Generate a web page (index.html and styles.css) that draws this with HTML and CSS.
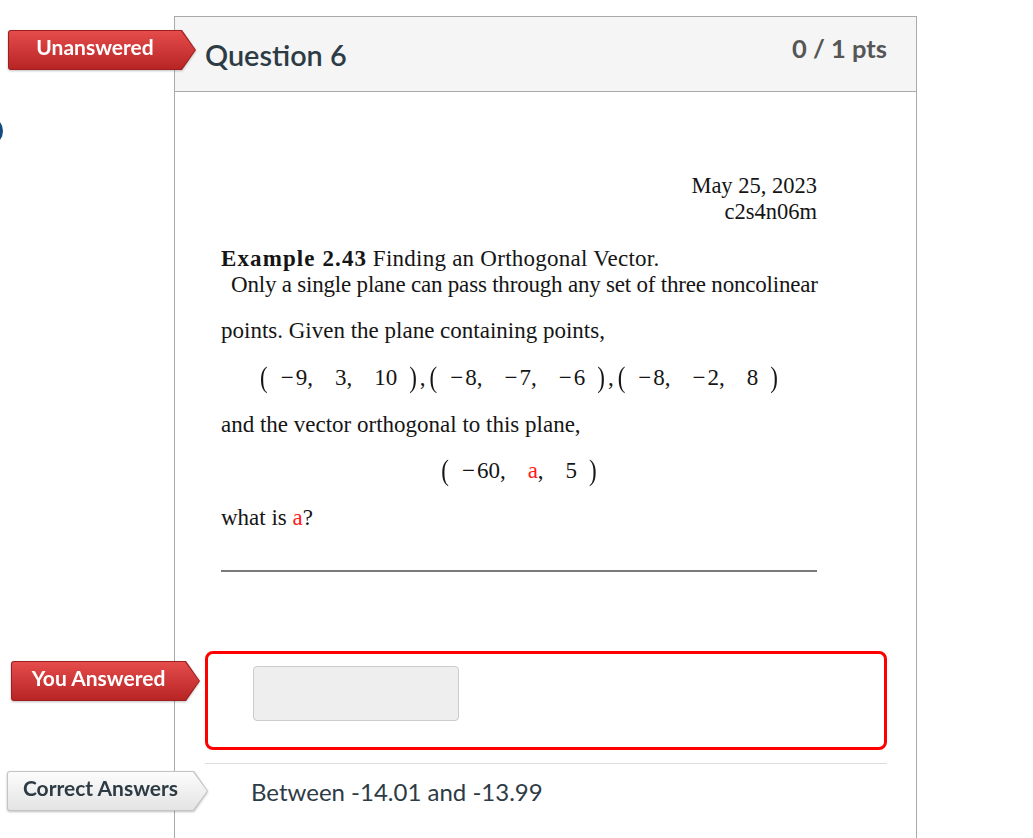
FILE: index.html
```html
<!DOCTYPE html>
<html>
<head>
<meta charset="utf-8">
<link rel="stylesheet" href="styles.css">
</head>
<body>
<div class="blob"></div>
<div class="question">
  <div class="header">
    <div class="tag tag-red tag-unanswered"><div class="tag-bg"></div><span class="tag-label">Unanswered</span></div>
    <h2 class="qname">Question 6</h2>
    <div class="pts">0 / 1 pts</div>
  </div>
  <div class="qbody">
    <div class="tex">
      <div class="meta">May 25, 2023<br>c2s4n06m</div>
      <div class="line gap"><b class="bf">Example 2.43</b> <span class="wide">Finding an Orthogonal Vector.</span></div>
      <div class="line indent">Only a single plane can pass through any set of three noncolinear</div>
      <div class="line gap2">points. Given the plane containing points,</div>
      <div class="math gap">
        <span class="lp">(</span><span class="num"><span class="mi">−</span>9,</span><span class="num">3,</span><span class="num">10</span><span class="rp">)</span><span class="cm">,</span>
        <span class="lp">(</span><span class="num"><span class="mi">−</span>8,</span><span class="num"><span class="mi">−</span>7,</span><span class="num"><span class="mi">−</span>6</span><span class="rp">)</span><span class="cm">,</span>
        <span class="lp">(</span><span class="num"><span class="mi">−</span>8,</span><span class="num"><span class="mi">−</span>2,</span><span class="num">8</span><span class="rp">)</span>
      </div>
      <div class="line gap">and the vector orthogonal to this plane,</div>
      <div class="math gap2">
        <span class="lp">(</span><span class="num"><span class="mi">−</span>60,</span><span class="num"><span class="red">a</span>,</span><span class="num">5</span><span class="rp">)</span>
      </div>
      <div class="line gap">what is <span class="red">a</span>?</div>
      <div class="rule"></div>
    </div>
    <div class="answer-row you">
      <div class="tag tag-red tag-you"><div class="tag-bg"></div><span class="tag-label">You Answered</span></div>
      <div class="answer-box"><div class="input"></div></div>
    </div>
    <div class="answer-row correct">
      <div class="tag tag-gray tag-correct"><div class="tag-bg"></div><span class="tag-label">Correct Answers</span></div>
      <div class="correct-text">Between -14.01 and -13.99</div>
    </div>
  </div>
</div>
</body>
</html>
```
FILE: styles.css
```css
html, body {
  margin: 0;
  padding: 0;
  background: #fff;
  overflow: hidden;
}
body {
  position: relative;
  width: 1033px;
  height: 838px;
  font-family: Lato, "Liberation Sans", sans-serif;
}
.blob {
  position: absolute;
  left: -27px;
  top: 116px;
  width: 30px;
  height: 30px;
  border-radius: 50%;
  background: #124b80;
}
.question {
  margin: 16px 0 0 174px;
  width: 743px;
  box-sizing: border-box;
  border: 1px solid #aaaaaa;
  border-bottom: none;
  height: 900px;
}
.header {
  position: relative;
  height: 74px;
  background: #f5f5f5;
  border-bottom: 1px solid #aaaaaa;
  display: flex;
  justify-content: space-between;
  align-items: flex-start;
  padding: 0 29px 0 30px;
}
.qname {
  margin: 0;
  padding-top: 21px;
  font-size: 28.8px;
  line-height: 34px;
  font-weight: 600;
  color: #2d3b45;
}
.pts {
  padding-top: 16px;
  font-size: 25.5px;
  line-height: 30px;
  font-weight: bold;
  color: #565656;
}
/* tags */
.tag {
  position: absolute;
  height: 40px;
  filter: drop-shadow(0 1px 1px rgba(0,0,0,0.25));
}
.tag-bg {
  position: absolute;
  inset: 0;
  border-radius: 3px 0 0 3px;
  clip-path: polygon(0 0, calc(100% - 14px) 0, 100% 50%, calc(100% - 14px) 100%, 0 100%);
}
.tag-bg::before {
  content: "";
  position: absolute;
  inset: 1px;
  border-radius: 2px 0 0 2px;
  clip-path: polygon(0 0, calc(100% - 14px) 0, 100% 50%, calc(100% - 14px) 100%, 0 100%);
}
.tag-red .tag-bg { background: #9e1f1f; }
.tag-red .tag-bg::before { background: linear-gradient(#e54c4c, #b82424); }
.tag-gray .tag-bg { background: #c4c4c4; }
.tag-gray .tag-bg::before { background: linear-gradient(#fcfcfc, #e4e4e4); }
.tag-label {
  position: relative;
  display: block;
  width: calc(100% - 14px);
  text-align: center;
  line-height: 34px;
  font-size: 21px;
  font-weight: bold;
  color: #fff;
  white-space: nowrap;
}
.tag-gray .tag-label { color: #2d3b45; }
.tag-unanswered { left: -167px; top: 13px; width: 188px; }
.tag-you { left: -194px; top: 10px; width: 189px; }
.tag-correct { left: -198px; top: 7px; width: 201px; }

/* body */
.qbody {
  padding: 81px 29px 0 30px;
}
.tex {
  margin-left: 16px;
  width: 596px;
  font-family: "Liberation Serif", "Times New Roman", serif;
  font-size: 23px;
  color: #151515;
  display: flex;
  flex-direction: column;
}
.meta {
  text-align: right;
  line-height: 26px;
  font-size: 22.5px;
}
.line {
  line-height: 26px;
  white-space: nowrap;
}
.gap { margin-top: 21px; }
.gap2 { margin-top: 20px; }
.indent { text-indent: 10px; letter-spacing: -0.2px; }
.bf { letter-spacing: 1.1px; }
.wide { letter-spacing: 0.25px; }
.math {
  display: flex;
  justify-content: center;
  align-items: baseline;
  line-height: 26px;
  white-space: nowrap;
}
.mi { padding-right: 2px; }
.lp, .rp {
  display: inline-block;
  transform: scaleY(1.3);
  font-size: 23px;
}
.lp { margin-right: 13px; }
.rp { margin-left: 12px; }
.num + .num { margin-left: 22px; }
.cm { margin: 0 4px 0 3px; }
.red { color: #ff1a1a; }
.rule {
  margin-top: 39px;
  height: 2px;
  background: #7a7a7a;
}
.answer-row {
  position: relative;
}
.you {
  margin-top: 79px;
}
.answer-box {
  border: 3px solid #ff0000;
  border-radius: 8px;
  padding: 12px 0 0 45px;
  box-sizing: content-box;
  height: 81px;
}
.input {
  width: 204px;
  height: 53px;
  background: #eeeeee;
  border: 1px solid #cccccc;
  border-radius: 4px;
}
.correct {
  margin-top: 13px;
  border-top: 1px solid #dddddd;
  padding: 13px 0 0 46px;
}
.correct-text {
  font-size: 24px;
  line-height: 30px;
  color: #2d3b45;
}
```
